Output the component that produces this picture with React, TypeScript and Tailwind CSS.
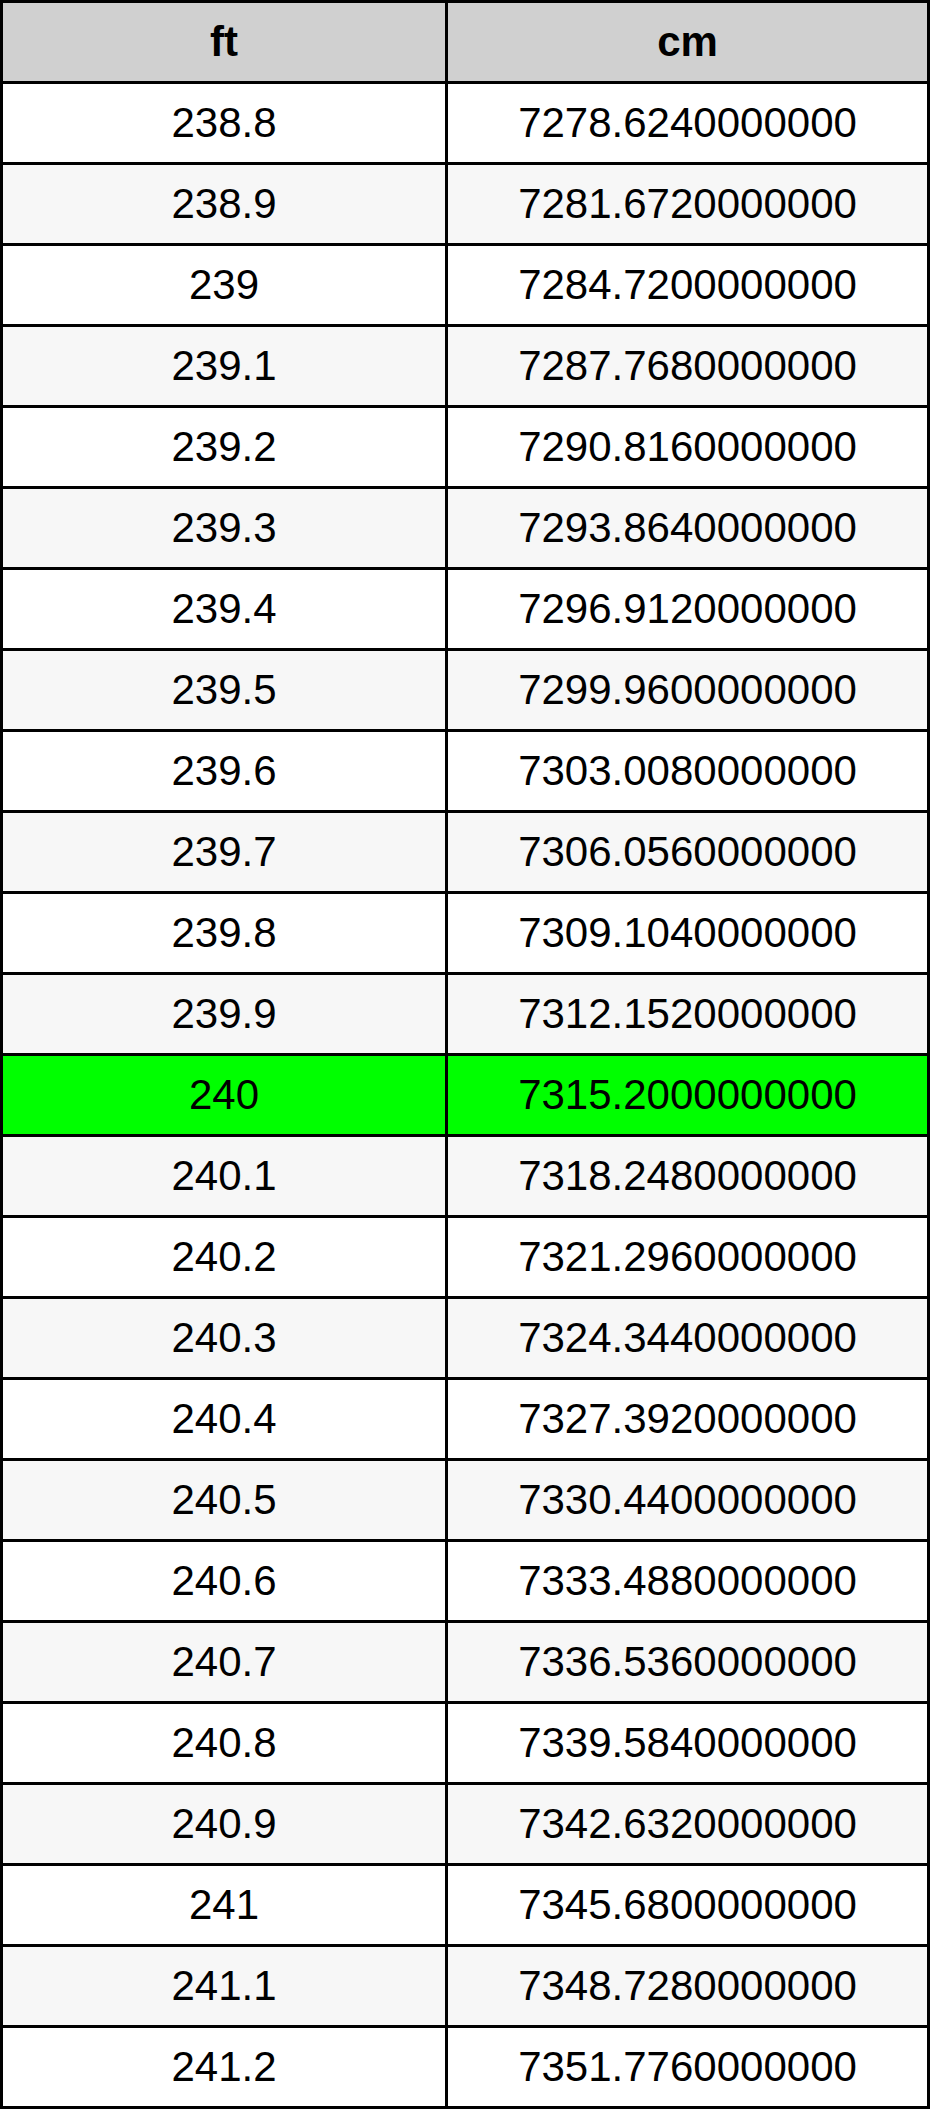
import React from 'react';

const rows = Array.from({ length: 25 }, (_, i) => {
  const tenths = 2388 + i;
  const ft = tenths % 10 === 0 ? String(tenths / 10) : `${Math.floor(tenths / 10)}.${tenths % 10}`;
  // cm = ft * 30.48, kept in integer math to avoid float noise
  const milli = tenths * 3048;
  const whole = Math.floor(milli / 1000);
  const frac = String(milli % 1000).padStart(3, '0');
  return { ft, cm: `${whole}.${frac}0000000`, hit: tenths === 2400 };
});

const App: React.FC = () => {
  return (
    <div className="bg-white w-[930px] h-[2115px]" style={{ fontFamily: '"Liberation Sans", Arial, sans-serif' }}>
      <div className="w-[930px] border-[3px] border-black text-black text-[42px] leading-none">
        <div className="flex h-[78px] bg-[#d0d0d0] font-bold">
          <div className="w-[445px] border-r-[3px] border-black flex items-center justify-center">ft</div>
          <div className="flex-1 flex items-center justify-center">cm</div>
        </div>
        {rows.map((r, i) => (
          <div
            key={r.ft}
            className={`flex h-[81px] border-t-[3px] border-black ${r.hit ? 'bg-[#00ff00]' : i % 2 === 1 ? 'bg-[#f7f7f7]' : 'bg-white'}`}
          >
            <div className="w-[445px] border-r-[3px] border-black flex items-center justify-center">{r.ft}</div>
            <div className="flex-1 flex items-center justify-center">{r.cm}</div>
          </div>
        ))}
      </div>
    </div>
  );
};

export default App;
